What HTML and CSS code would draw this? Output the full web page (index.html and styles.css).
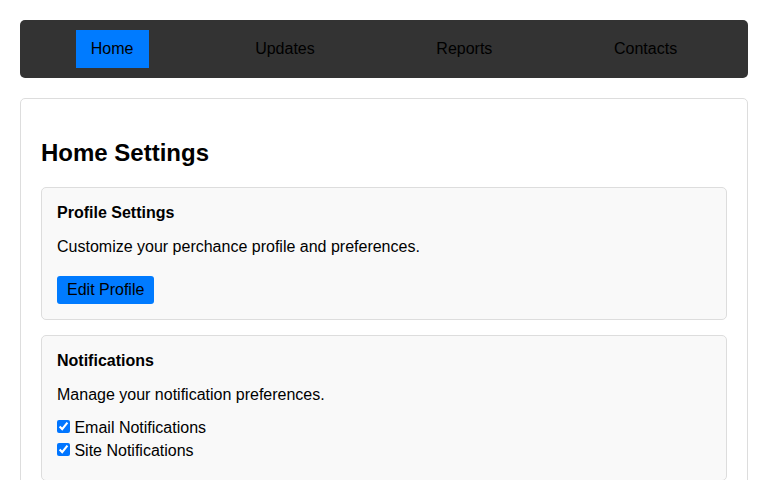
FILE: index.html
```html
<!DOCTYPE html>
<html>
<head>
<meta charset="utf-8">
<link rel="stylesheet" href="styles.css">
</head>
<body>
<div class="page">
  <nav class="nav">
    <a class="nav-link active" href="#">Home</a>
    <a class="nav-link" href="#">Updates</a>
    <a class="nav-link" href="#">Reports</a>
    <a class="nav-link" href="#">Contacts</a>
  </nav>
  <main class="container">
    <h2 class="title">Home Settings</h2>
    <section class="card">
      <h3 class="card-title">Profile Settings</h3>
      <p class="card-text">Customize your perchance profile and preferences.</p>
      <button class="btn">Edit Profile</button>
    </section>
    <section class="card">
      <h3 class="card-title">Notifications</h3>
      <p class="card-text tight">Manage your notification preferences.</p>
      <label class="option"><input type="checkbox" checked> Email Notifications</label>
      <label class="option"><input type="checkbox" checked> Site Notifications</label>
    </section>
  </main>
</div>
</body>
</html>
```
FILE: styles.css
```css
html, body {
  margin: 0;
  padding: 0;
  background: #fff;
}
body {
  font-family: "Liberation Sans", Arial, sans-serif;
  font-size: 16px;
  color: #000;
}
.page {
  padding: 20px;
}
.nav {
  display: flex;
  justify-content: space-around;
  align-items: center;
  background: #333;
  border-radius: 5px;
  padding: 10px;
}
.nav-link {
  display: block;
  padding: 10px 15px;
  color: #000;
  text-decoration: none;
}
.nav-link.active {
  background: #007bff;
}
.container {
  margin-top: 20px;
  border: 1px solid #ddd;
  border-radius: 5px;
  padding: 20px;
  background: #fff;
}
.title {
  font-size: 24px;
  font-weight: bold;
  margin: 0.83em 0;
}
.card {
  background: #f9f9f9;
  border: 1px solid #ddd;
  border-radius: 5px;
  padding: 15px;
  margin-bottom: 15px;
}
.card-title {
  font-size: 16px;
  font-weight: bold;
  margin: 1px 0 16px;
}
.card-text {
  margin: 0 0 20px;
}
.card-text.tight {
  margin-bottom: 15px;
}
.btn {
  display: block;
  font-family: "Liberation Sans", Arial, sans-serif;
  font-size: 16px;
  padding: 5px 10px;
  background: #007bff;
  color: #000;
  border: none;
  border-radius: 3px;
}
.option {
  display: block;
  margin-bottom: 5px;
}
.option input {
  margin: 0;
  width: 13px;
  height: 13px;
}
```
